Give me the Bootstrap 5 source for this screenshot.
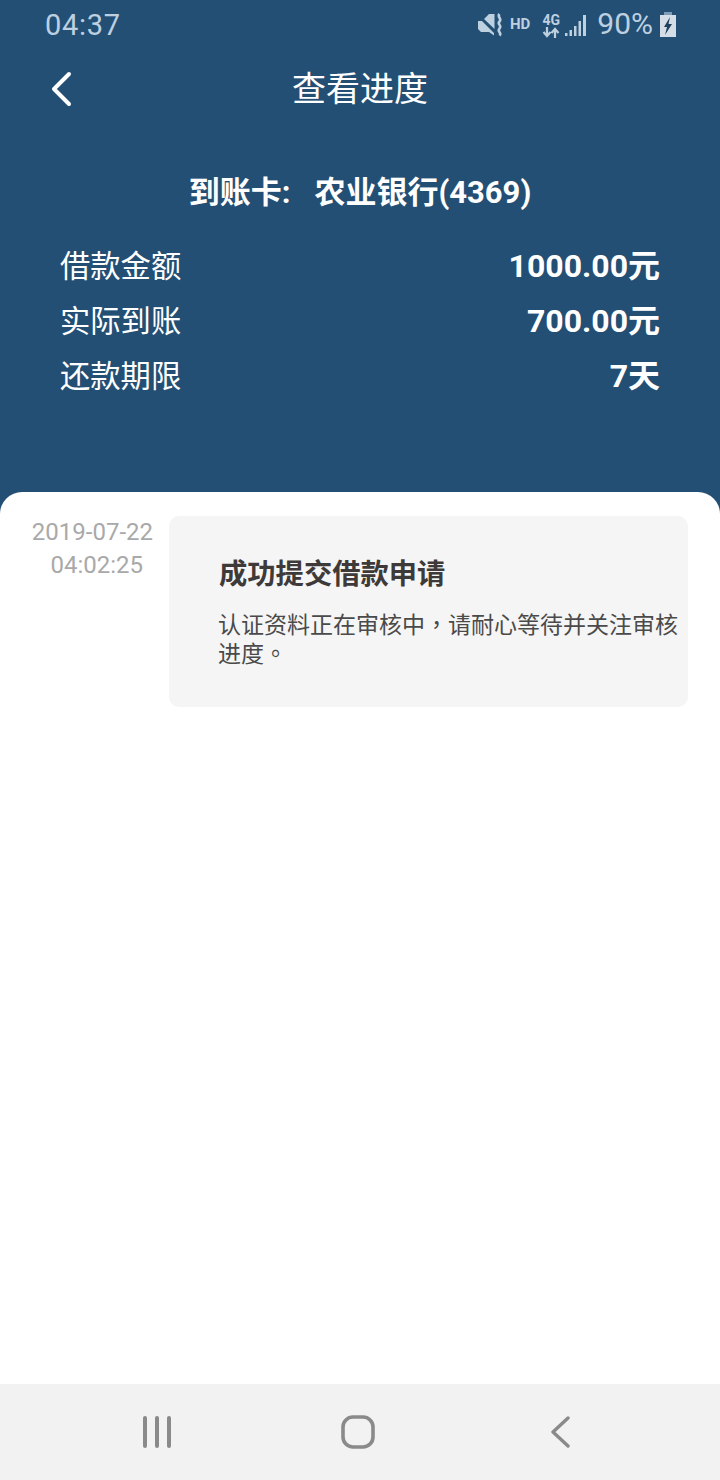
<!DOCTYPE html>
<html lang="zh">
<head>
  <meta charset="UTF-8">
  <meta name="viewport" content="width=device-width, initial-scale=1">
  <title>查看进度</title>
  <link href="https://cdn.jsdelivr.net/npm/bootstrap@5.3.3/dist/css/bootstrap.min.css" rel="stylesheet">
  <style>
    body {
      width: 720px;
      height: 1480px;
      overflow: hidden;
      background: #fff;
      font-family: Roboto, "Noto Sans CJK SC", sans-serif;
    }
    .screen { height: 1480px; }
    .head-area {
      background: #244f75;
      height: 520px;
      color: #fff;
    }
    .status-row {
      height: 50px;
      padding: 0 44px 0 45px;
      color: #bdd0e0;
    }
    .clock { font-size: 29px; letter-spacing: .7px; margin-top: 2px; }
    .hd-label { font-size: 15px; font-weight: 700; margin-left: 5px; width: 21px; text-align: right; margin-bottom: 2px; }
    .net-label {
      width: 18px;
      margin-left: 12px;
      font-size: 14px;
      font-weight: 700;
    }
    .pct { font-size: 30px; margin: 0 7px 3px 10px; }
    .title-row {
      height: 78px;
      padding-left: 50px;
    }
    .title-text {
      left: 0;
      right: 0;
      top: 0;
      line-height: 78px;
      font-size: 34px;
    }
    .card-line {
      margin-top: 26px;
      line-height: 78px;
      height: 78px;
      font-size: 31px;
      font-weight: 700;
    }
    .card-line span { margin-left: 24px; }
    .amount-list {
      margin-top: 7px;
      padding: 0 60px;
      font-size: 30.300px;
    }
    .amount-row { height: 55px; line-height: 55px; }
    .amount-row b { font-size: 32px; font-weight: 700; }
    .sheet {
      margin-top: -28px;
      background: #fff;
      border-radius: 22px 22px 0 0;
      padding: 24px 32px 0 0;
      height: 892px;
    }
    .time-col {
      width: 169px;
      flex: none;
      padding: 0 16px 0 20px;
      text-align: right;
      color: #a9a9a9;
      font-size: 24px;
      line-height: 33px;
    }
    .time-col div:last-child { padding-right: 10px; }
    .step-box {
      flex: 1;
      height: 191px;
      background: #f5f5f5;
      border-radius: 10px;
      padding: 39px 10px 0 49px;
      color: #3f3a3a;
    }
    .step-title {
      font-size: 28.300px;
      font-weight: 700;
      line-height: 40px;
      margin: 0 0 14px 1px;
    }
    .step-text {
      font-family: "Noto Sans CJK TC", sans-serif;
      font-size: 23px;
      line-height: 29px;
      margin: 0;
      color: #4a4a4a;
    }
    .soft-bar {
      height: 96px;
      background: #f2f2f2;
      padding-left: 142px;
    }
    .soft-home { margin-left: 167px; }
    .soft-back { margin-left: 175px; }
  </style>
</head>
<body>
<div class="screen d-flex flex-column">
  <div class="head-area">
    <div class="status-row d-flex align-items-center justify-content-between">
      <div class="clock">04:37</div>
      <div class="d-flex align-items-center">
        <svg width="26" height="24" viewBox="0 0 26 24">
          <path d="M0 8h4L16 20v2.500L11 19H3l-3-3zM6 6l5-5h5.500v15z" fill="#bdd0e0"/>
          <path d="M21.500 1c-3 3 3 4.500 0 7.500s3 3.500 0 7 3 4 0 7" fill="none" stroke="#bdd0e0" stroke-width="2.600"/>
        </svg>
        <span class="hd-label">HD</span>
        <div class="net-label d-flex flex-column align-items-center lh-1">
          <span>4G</span>
          <svg width="18" height="11" viewBox="0 0 18 11">
            <path d="M5 0v8M1.500 5l3.500 4 3.500-4M13 11V3M9.500 6L13 2l3.500 4" fill="none" stroke="#bdd0e0" stroke-width="2.200"/>
          </svg>
        </div>
        <svg class="ms-1" width="23" height="24" viewBox="0 0 23 24">
          <path d="M1 20h2.500v3H1zM5.500 17H8v6H5.500zM10 13h2.500v10H10zM14.500 8H17v15h-2.500zM19 2h3v21h-3z" fill="#bdd0e0"/>
        </svg>
        <span class="pct">90%</span>
        <svg width="16" height="26" viewBox="0 0 16 26">
          <path d="M4 0h8v3H4z" fill="#7f9db6"/>
          <path d="M0 3h16v22H0z" fill="#d5dee6"/>
          <path d="M10 5l-6 10h3l-2 8 7-11H8.500z" fill="#20405c"/>
        </svg>
      </div>
    </div>
    <div class="title-row position-relative d-flex align-items-center">
      <div class="title-text position-absolute text-center">查看进度</div>
      <svg width="22" height="36" viewBox="0 0 22 36">
        <path d="M19 3L4 18l15 15" fill="none" stroke="#fff" stroke-width="4" stroke-linecap="round" stroke-linejoin="round"/>
      </svg>
    </div>
    <div class="card-line text-center">到账卡:<span>农业银行(4369)</span></div>
    <div class="amount-list">
      <div class="amount-row d-flex justify-content-between"><span>借款金额</span><b>1000.00元</b></div>
      <div class="amount-row d-flex justify-content-between"><span>实际到账</span><b>700.00元</b></div>
      <div class="amount-row d-flex justify-content-between"><span>还款期限</span><b>7天</b></div>
    </div>
  </div>
  <div class="sheet d-flex align-items-start">
    <div class="time-col">
      <div>2019-07-22</div>
      <div>04:02:25</div>
    </div>
    <div class="step-box">
      <div class="step-title">成功提交借款申请</div>
      <p class="step-text" lang="zh-TW">认证资料正在审核中，请耐心等待并关注审核进度。</p>
    </div>
  </div>
  <div class="soft-bar d-flex align-items-center">
    <svg width="32" height="32" viewBox="0 0 32 32">
      <path d="M3 2v28M15 2v28M27 2v28" fill="none" stroke="#8a8a8a" stroke-width="4" stroke-linecap="round"/>
    </svg>
    <svg class="soft-home" width="34" height="34" viewBox="0 0 34 34">
      <rect x="2" y="2" width="30" height="30" rx="10" fill="none" stroke="#8a8a8a" stroke-width="3.600"/>
    </svg>
    <svg class="soft-back" width="20" height="32" viewBox="0 0 20 32">
      <path d="M18 2L3 16l15 14" fill="none" stroke="#8a8a8a" stroke-width="3.400" stroke-linecap="round" stroke-linejoin="round"/>
    </svg>
  </div>
</div>
<script src="https://cdn.jsdelivr.net/npm/bootstrap@5.3.3/dist/js/bootstrap.bundle.min.js"></script>
</body>
</html>
